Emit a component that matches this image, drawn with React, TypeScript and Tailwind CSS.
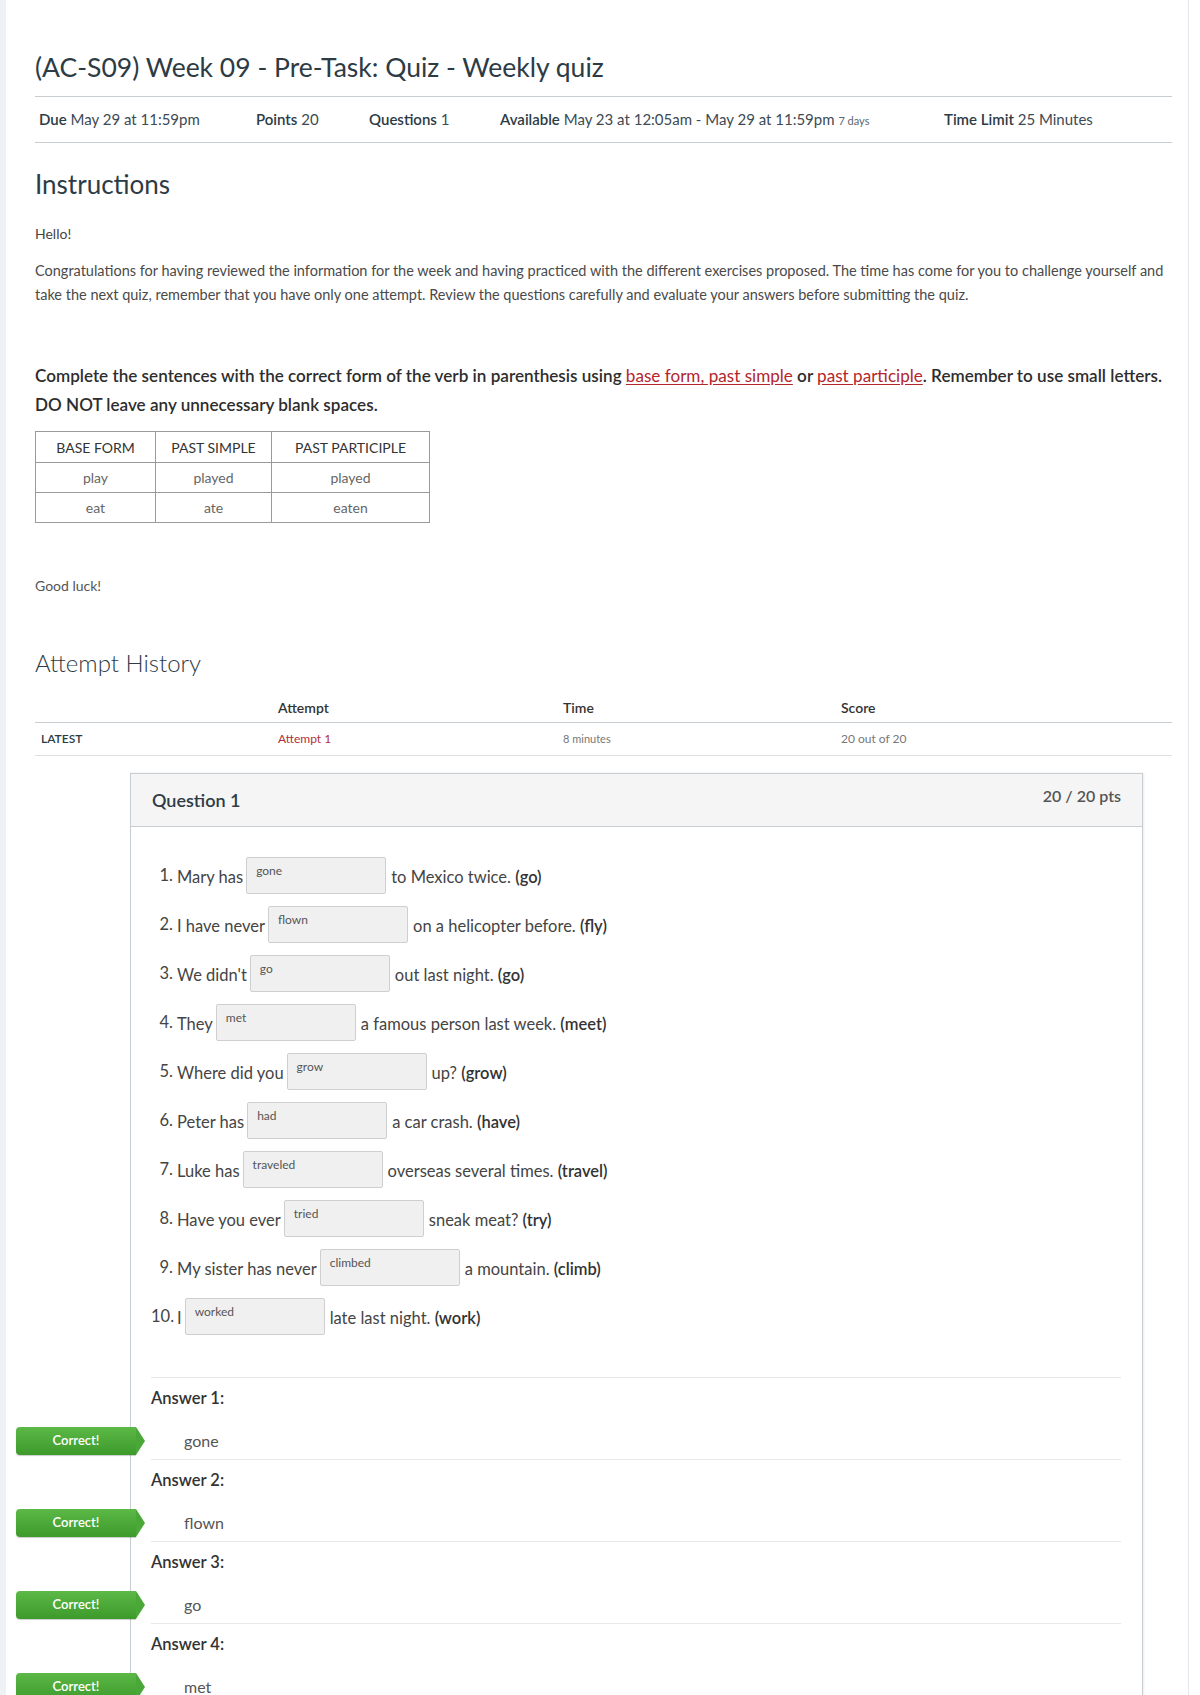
const questions = [
  { n: '1.', before: 'Mary has', answer: 'gone', after: 'to Mexico twice.', verb: '(go)' },
  { n: '2.', before: 'I have never', answer: 'flown', after: 'on a helicopter before.', verb: '(fly)' },
  { n: '3.', before: "We didn't", answer: 'go', after: 'out last night.', verb: '(go)' },
  { n: '4.', before: 'They', answer: 'met', after: 'a famous person last week.', verb: '(meet)' },
  { n: '5.', before: 'Where did you', answer: 'grow', after: 'up?', verb: '(grow)' },
  { n: '6.', before: 'Peter has', answer: 'had', after: 'a car crash.', verb: '(have)' },
  { n: '7.', before: 'Luke has', answer: 'traveled', after: 'overseas several times.', verb: '(travel)' },
  { n: '8.', before: 'Have you ever', answer: 'tried', after: 'sneak meat?', verb: '(try)' },
  { n: '9.', before: 'My sister has never', answer: 'climbed', after: 'a mountain.', verb: '(climb)' },
  { n: '10.', before: 'I', answer: 'worked', after: 'late last night.', verb: '(work)' },
];

const answers = ['gone', 'flown', 'go', 'met'];

function CorrectBadge() {
  return (
    <div className="absolute left-[-135px] top-1/2 -translate-y-1/2 flex items-center">
      <div className="h-[28px] w-[120px] rounded-l-[4px] bg-gradient-to-b from-[#5cb947] to-[#3c9a2b] text-white text-[13px] font-semibold flex items-center justify-center shadow-[0_1px_1px_rgba(0,0,0,0.2)]">
        Correct!
      </div>
      <div className="h-0 w-0 border-y-[14px] border-y-transparent border-l-[9px] border-l-[#4aa838]" />
    </div>
  );
}

export default function App() {
  return (
    <div className="min-h-[1695px] bg-white flex font-['Lato','Noto_Sans',sans-serif] text-[#2d3b45] overflow-hidden">
      <div className="w-[6px] shrink-0 bg-[#eef2f7]" />
      <div className="w-[1183px] shrink-0 pl-[29px] pr-[16px] border-r border-[#e4e8ec]">
        <h1 className="pt-[50px] h-[96px] text-[26.5px] leading-[34px] font-normal">
          (AC-S09) Week 09 - Pre-Task: Quiz - Weekly quiz
        </h1>
        <div className="border-y border-[#c7cdd1] h-[47px] flex items-center text-[15px] text-[#3d4a54] pl-[4px]">
          <span className="w-[217px]">
            <b className="font-semibold text-[#2d3b45]">Due</b> May 29 at 11:59pm
          </span>
          <span className="w-[113px]">
            <b className="font-semibold text-[#2d3b45]">Points</b> 20
          </span>
          <span className="w-[131px]">
            <b className="font-semibold text-[#2d3b45]">Questions</b> 1
          </span>
          <span className="w-[444px]">
            <b className="font-semibold text-[#2d3b45]">Available</b> May 23 at 12:05am - May 29 at 11:59pm{' '}
            <span className="text-[11px] text-[#5b6770]">7 days</span>
          </span>
          <span>
            <b className="font-semibold text-[#2d3b45]">Time Limit</b> 25 Minutes
          </span>
        </div>

        <h2 className="mt-[26px] text-[26px] leading-[30px] font-normal">Instructions</h2>
        <p className="mt-[24px] text-[14px] text-[#444]">Hello!</p>
        <p className="mt-[15px] text-[14.5px] leading-[24px] text-[#4a4a4a]">
          Congratulations for having reviewed the information for the week and having practiced with the different exercises proposed. The time has come for you to challenge yourself and take the next quiz, remember that you have only one attempt. Review the questions carefully and evaluate your answers before submitting the quiz.
        </p>
        <p className="mt-[54px] text-[17.1px] leading-[29px] font-semibold text-[#2d2d2d]">
          Complete the sentences with the correct form of the verb in parenthesis using{' '}
          <span className="text-[#b3262c] underline underline-offset-2 font-normal">base form, past simple</span> or{' '}
          <span className="text-[#b3262c] underline underline-offset-2 font-normal">past participle</span>. Remember to use small letters. DO NOT leave any unnecessary blank spaces.
        </p>
        <table className="mt-[12px] border-collapse text-[14px] text-center">
          <thead>
            <tr className="h-[31px] text-[#333]">
              <th className="w-[120px] border border-[#9a9a9a] font-normal">BASE FORM</th>
              <th className="w-[116px] border border-[#9a9a9a] font-normal">PAST SIMPLE</th>
              <th className="w-[158px] border border-[#9a9a9a] font-normal">PAST PARTICIPLE</th>
            </tr>
          </thead>
          <tbody className="text-[#666]">
            <tr className="h-[30px]">
              <td className="border border-[#9a9a9a]">play</td>
              <td className="border border-[#9a9a9a]">played</td>
              <td className="border border-[#9a9a9a]">played</td>
            </tr>
            <tr className="h-[30px]">
              <td className="border border-[#9a9a9a]">eat</td>
              <td className="border border-[#9a9a9a]">ate</td>
              <td className="border border-[#9a9a9a]">eaten</td>
            </tr>
          </tbody>
        </table>
        <p className="mt-[52px] text-[14px] text-[#555]">Good luck!</p>

        <h2 className="mt-[52px] text-[24px] leading-[30px] font-light text-[#2d3b45]">Attempt History</h2>
        <div className="mt-[15px]">
          <div className="flex h-[30px] items-center text-[14px] font-semibold text-[#333] border-b border-[#c7cdd1]">
            <span className="w-[243px]" />
            <span className="w-[285px]">Attempt</span>
            <span className="w-[278px]">Time</span>
            <span>Score</span>
          </div>
          <div className="flex h-[33px] items-center text-[12px] border-b border-[#dde1e4]">
            <span className="w-[243px] pl-[6px] font-semibold text-[#2d3b45]">LATEST</span>
            <span className="w-[285px] text-[#b0303a]">Attempt 1</span>
            <span className="w-[278px] text-[#777] text-[11px]">8 minutes</span>
            <span className="text-[#777]">20 out of 20</span>
          </div>
        </div>

        <div className="mt-[17px] ml-[95px] mr-[29px] border border-[#c7cdd1] border-b-0 shadow-[1px_0_2px_rgba(0,0,0,0.08)]">
          <div className="h-[53px] bg-[#f5f5f5] border-b border-[#c7cdd1] flex items-center justify-between pl-[21px] pr-[21px]">
            <span className="text-[18px] font-semibold text-[#2d3b45]">Question 1</span>
            <span className="text-[16px] font-semibold text-[#555] -mt-[8px]">20 / 20 pts</span>
          </div>
          <div className="pl-[20px] pr-[21px] pt-[30px]">
            <div className="flex flex-col gap-[12px] text-[16.5px] text-[#444]">
              {questions.map((q) => (
                <div key={q.n} className="flex items-center h-[37px] whitespace-nowrap">
                  <span className="w-[22px] text-right">{q.n}</span>
                  <span className="ml-[4px] mt-[3px]">{q.before}</span>
                  <span className="ml-[3px] h-[37px] w-[140px] bg-[#f0f0f0] border border-[#cfcfcf] rounded-[2px] pl-[9px] pt-[5px] text-[12px] text-[#555] leading-[16px]">
                    {q.answer}
                  </span>
                  <span className="ml-[5px] mt-[3px]">
                    {q.after} <b className="font-semibold text-[#333]">{q.verb}</b>
                  </span>
                </div>
              ))}
            </div>
            <div className="mt-[42px]">
              {answers.map((a, i) => (
                <div key={a} className="relative border-t border-[#e6e8ea] h-[82px]">
                  <div className="pt-[8px] text-[16.5px] font-semibold text-[#333]">Answer {i + 1}:</div>
                  <div className="relative mt-[18px] pl-[33px] text-[16px] text-[#555] h-[24px] flex items-center">
                    <CorrectBadge />
                    {a}
                  </div>
                </div>
              ))}
            </div>
          </div>
        </div>
      </div>
    </div>
  );
}
